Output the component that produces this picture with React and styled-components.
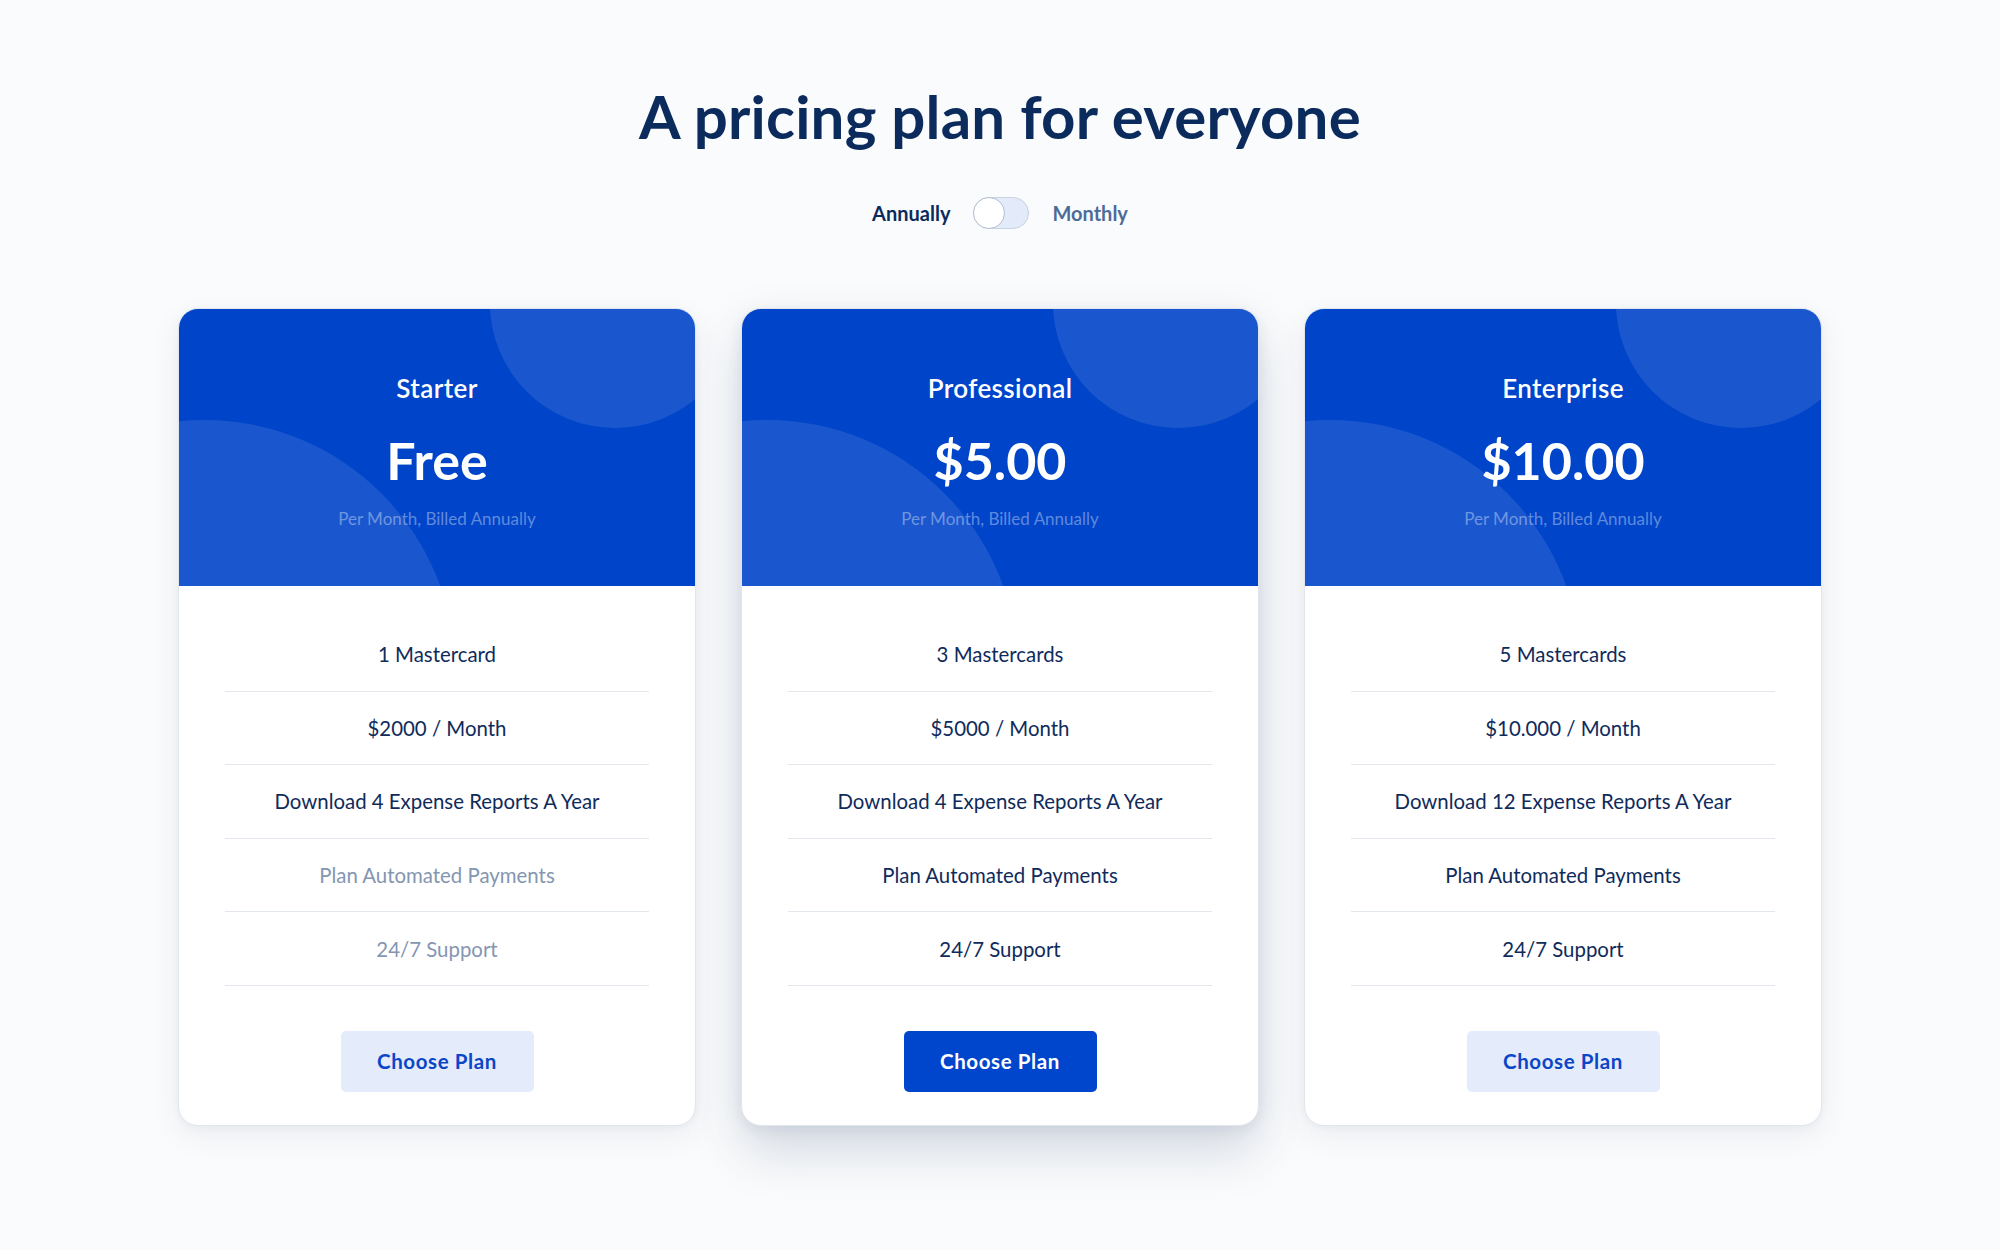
import React, { useState } from "react";
import styled, { createGlobalStyle, css } from "styled-components";

const GlobalStyle = createGlobalStyle`
  * { box-sizing: border-box; }
  html, body { margin: 0; padding: 0; }
  body {
    background: #fafbfc;
    font-family: Lato, "Noto Sans", "Open Sans", sans-serif;
    -webkit-font-smoothing: antialiased;
  }
`;

const Page = styled.main`
  min-height: 1250px;
  display: flex;
  flex-direction: column;
  align-items: center;
  padding-top: 78px;
`;

const Title = styled.h1`
  margin: 0;
  font-size: 60px;
  line-height: 77px;
  font-weight: 700;
  color: #0b2b5c;
  letter-spacing: 0.2px;
`;

const ToggleRow = styled.div`
  margin-top: 41px;
  display: flex;
  align-items: center;
  gap: 23px;
  height: 34px;
`;

const ToggleLabel = styled.span`
  font-size: 20px;
  font-weight: 700;
  color: ${(p) => (p.$active ? "#0b2b5c" : "#4d6b98")};
  cursor: pointer;
`;

const Track = styled.button`
  position: relative;
  width: 56px;
  height: 32px;
  padding: 0;
  border-radius: 16px;
  border: 1px solid #c8d2e0;
  background: #e3eaf9;
  cursor: pointer;
`;

const Knob = styled.span`
  position: absolute;
  top: -1px;
  left: ${(p) => (p.$on ? "23px" : "-1px")};
  width: 32px;
  height: 32px;
  border-radius: 50%;
  background: #ffffff;
  border: 1px solid #b3bfd0;
  transition: left 0.2s;
`;

const Cards = styled.section`
  margin-top: 78px;
  display: grid;
  grid-template-columns: repeat(3, 518px);
  gap: 45px;
`;

const Card = styled.article`
  background: #ffffff;
  border-radius: 20px;
  overflow: hidden;
  border: 1px solid #e1e6ed;
  display: flex;
  flex-direction: column;
  box-shadow: ${(p) =>
    p.$featured
      ? "0 24px 52px rgba(30, 55, 100, 0.18), 0 4px 14px rgba(30, 55, 100, 0.08)"
      : "0 10px 30px rgba(30, 55, 100, 0.07), 0 2px 8px rgba(30, 55, 100, 0.04)"};
`;

const Header = styled.header`
  position: relative;
  overflow: hidden;
  height: 277px;
  background: #0045c9;
  display: flex;
  flex-direction: column;
  align-items: center;
  padding-top: 63px;
  color: #ffffff;

  &::before {
    content: "";
    position: absolute;
    left: 311px;
    top: -131px;
    width: 250px;
    height: 250px;
    border-radius: 50%;
    background: rgba(255, 255, 255, 0.1);
  }

  &::after {
    content: "";
    position: absolute;
    left: -226px;
    top: 111px;
    width: 502px;
    height: 502px;
    border-radius: 50%;
    background: rgba(255, 255, 255, 0.1);
  }
`;

const PlanName = styled.h2`
  position: relative;
  z-index: 1;
  margin: 0;
  font-size: 26px;
  line-height: 32px;
  font-weight: 600;
  letter-spacing: 0.4px;
`;

const Price = styled.div`
  position: relative;
  z-index: 1;
  margin-top: 25px;
  font-size: 52px;
  line-height: 62px;
  font-weight: 700;
`;

const Billing = styled.div`
  position: relative;
  z-index: 1;
  margin-top: 17px;
  font-size: 17px;
  line-height: 22px;
  color: rgba(255, 255, 255, 0.38);
`;

const Body = styled.div`
  display: flex;
  flex-direction: column;
  align-items: center;
  padding: 32px 46px 33px;
`;

const Features = styled.ul`
  list-style: none;
  margin: 0;
  padding: 0;
  width: 100%;
`;

const Feature = styled.li`
  height: 73.6px;
  display: flex;
  align-items: center;
  justify-content: center;
  border-bottom: 1.5px solid #e2e7ee;
  font-size: 20.4px;
  color: ${(p) => (p.$disabled ? "#8496b1" : "#0f2b5b")};
`;

const ChooseButton = styled.button`
  margin-top: 45px;
  width: 193px;
  height: 61px;
  border: none;
  border-radius: 5px;
  font-family: inherit;
  font-size: 20.5px;
  font-weight: 700;
  letter-spacing: 0.6px;
  cursor: pointer;
  ${(p) =>
    p.$primary
      ? css`
          background: #0046cc;
          color: #ffffff;
        `
      : css`
          background: #e4ebfb;
          color: #0a46c8;
        `}
`;

const plans = [
  {
    name: "Starter",
    price: "Free",
    features: [
      ["1 Mastercard", false],
      ["$2000 / Month", false],
      ["Download 4 Expense Reports A Year", false],
      ["Plan Automated Payments", true],
      ["24/7 Support", true],
    ],
  },
  {
    name: "Professional",
    price: "$5.00",
    featured: true,
    features: [
      ["3 Mastercards", false],
      ["$5000 / Month", false],
      ["Download 4 Expense Reports A Year", false],
      ["Plan Automated Payments", false],
      ["24/7 Support", false],
    ],
  },
  {
    name: "Enterprise",
    price: "$10.00",
    features: [
      ["5 Mastercards", false],
      ["$10.000 / Month", false],
      ["Download 12 Expense Reports A Year", false],
      ["Plan Automated Payments", false],
      ["24/7 Support", false],
    ],
  },
];

export default function App() {
  const [monthly, setMonthly] = useState(false);
  return (
    <>
      <GlobalStyle />
      <Page>
        <Title>A pricing plan for everyone</Title>
        <ToggleRow>
          <ToggleLabel $active={!monthly} onClick={() => setMonthly(false)}>
            Annually
          </ToggleLabel>
          <Track aria-label="Toggle billing" onClick={() => setMonthly((m) => !m)}>
            <Knob $on={monthly} />
          </Track>
          <ToggleLabel $active={monthly} onClick={() => setMonthly(true)}>
            Monthly
          </ToggleLabel>
        </ToggleRow>
        <Cards>
          {plans.map((plan) => (
            <Card key={plan.name} $featured={plan.featured}>
              <Header>
                <PlanName>{plan.name}</PlanName>
                <Price>{plan.price}</Price>
                <Billing>Per Month, Billed Annually</Billing>
              </Header>
              <Body>
                <Features>
                  {plan.features.map(([text, disabled]) => (
                    <Feature key={text} $disabled={disabled}>
                      {text}
                    </Feature>
                  ))}
                </Features>
                <ChooseButton $primary={plan.featured}>Choose Plan</ChooseButton>
              </Body>
            </Card>
          ))}
        </Cards>
      </Page>
    </>
  );
}
